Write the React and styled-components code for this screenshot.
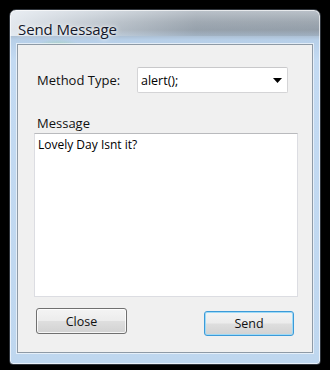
import React from "react";
import styled, { createGlobalStyle } from "styled-components";

const Global = createGlobalStyle`
  html, body { margin: 0; padding: 0; background: #000; }
  body { width: 330px; height: 370px; overflow: hidden; font-family: "Open Sans", "Noto Sans", sans-serif; }
`;

const Stage = styled.div`
  width: 330px;
  height: 370px;
  padding: 9px 0 0 9px;
  box-sizing: border-box;
`;

const Frame = styled.div`
  width: 312px;
  height: 356px;
  box-sizing: border-box;
  border: 1px solid #2e333a;
  border-radius: 7px 7px 4px 4px;
  background:
    radial-gradient(ellipse 22px 7px at 48px 36px, rgba(150, 210, 150, 0.5), transparent) no-repeat,
    linear-gradient(90deg, rgba(238, 242, 247, 0.85) 0%, rgba(220, 226, 232, 0.45) 30%, rgba(130, 140, 150, 0.25) 60%, rgba(110, 120, 130, 0.2) 100%) 0 0 / 100% 26px no-repeat,
    linear-gradient(180deg, #cfd5dc 0px, #aab3bc 12px, #9da8b3 20px, #b7cfe8 30px, #c3daf2 50px, #bfd7ef 100%);
  box-shadow: inset 0 0 0 1px rgba(255, 255, 255, 0.65);
  display: flex;
  flex-direction: column;
  padding: 0 7px 11px 7px;
`;

const TitleBar = styled.div`
  height: 34px;
  display: flex;
  align-items: center;
  padding-left: 1px;
  flex-shrink: 0;
`;

const Title = styled.span`
  font-size: 15px;
  color: #14182a;
  letter-spacing: -0.1px;
  text-shadow: 0 0 6px rgba(255, 255, 255, 0.9), 0 0 3px rgba(255, 255, 255, 0.9);
  margin-top: 4px;
`;

const Client = styled.div`
  flex: 1;
  background: #f0f0f0;
  border: 1px solid #8e9aa6;
  box-shadow: 0 0 0 1px rgba(255, 255, 255, 0.6);
  font-size: 13px;
  color: #000;
  padding: 0 16px;
`;

const MethodRow = styled.div`
  display: flex;
  align-items: center;
  margin-top: 22px;
  padding-left: 3px;
`;

const Label = styled.span`
  font-size: 13px;
  color: #111;
  width: 100px;
  flex-shrink: 0;
`;

const Select = styled.div`
  width: 151px;
  height: 26px;
  box-sizing: border-box;
  background: #fff;
  border: 1px solid #d4d4d6;
  border-top-color: #c8c8ca;
  border-radius: 2px;
  display: flex;
  align-items: center;
  justify-content: space-between;
  padding: 0 4px 0 3px;
  font-size: 12.5px;
`;

const Arrow = styled.svg`
  width: 9px;
  height: 5px;
  margin-right: 1px;
`;

const MessageLabel = styled.div`
  margin-top: 22px;
  padding-left: 3px;
  font-size: 13px;
  color: #111;
  line-height: 16px;
`;

const TextArea = styled.div`
  margin-top: 2px;
  width: 264px;
  height: 164px;
  box-sizing: border-box;
  background: #fff;
  border: 1px solid #dcdde2;
  border-top-color: #b9babd;
  padding: 3px 3px;
  font-size: 12px;
  line-height: 16px;
  color: #000;
`;

const ButtonRow = styled.div`
  display: flex;
  align-items: flex-start;
  justify-content: space-between;
  margin-top: 11px;
  padding: 0 2px;
`;

const Button = styled.div`
  width: ${(p) => p.$w}px;
  height: ${(p) => p.$h}px;
  margin-top: ${(p) => p.$offset || 0}px;
  box-sizing: border-box;
  border: 1px solid ${(p) => (p.$default ? "#3c9ad8" : "#707070")};
  border-radius: 3px;
  background: linear-gradient(180deg, #f4f4f4 0%, #ececec 48%, #dedede 52%, #d2d2d2 100%);
  box-shadow: inset 0 0 0 1px ${(p) => (p.$default ? "#9fdaf6" : "rgba(255,255,255,0.8)")};
  display: flex;
  align-items: center;
  justify-content: center;
  font-size: 12.5px;
  color: #111;
`;

export default function App() {
  return (
    <>
      <Global />
      <Stage>
        <Frame>
          <TitleBar>
            <Title>Send Message</Title>
          </TitleBar>
          <Client>
            <MethodRow>
              <Label>Method Type:</Label>
              <Select>
                <span>alert();</span>
                <Arrow viewBox="0 0 9 5">
                  <path d="M0 0 L9 0 L4.5 5 Z" fill="#000" />
                </Arrow>
              </Select>
            </MethodRow>
            <MessageLabel>Message</MessageLabel>
            <TextArea>Lovely Day Isnt it?</TextArea>
            <ButtonRow>
              <Button $w={91} $h={26}>Close</Button>
              <Button $w={90} $h={25} $offset={3} $default>
                Send
              </Button>
            </ButtonRow>
          </Client>
        </Frame>
      </Stage>
    </>
  );
}
